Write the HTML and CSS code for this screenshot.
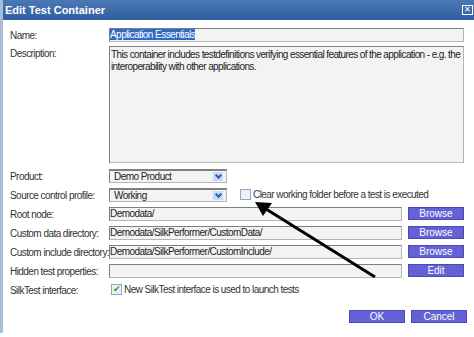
FILE: index.html
```html
<!DOCTYPE html>
<html lang="en">
<head>
  <meta charset="UTF-8">
  <title>Edit Test Container</title>
  <link rel="stylesheet" href="styles.css">
</head>
<body>
  <div class="window">
    <div class="titlebar">
      <span class="title">Edit Test Container</span>
      <span class="close">&#x2715;</span>
    </div>
    <div class="form">
      <label class="label">Name:</label>
      <div class="field"><span class="input full"><span class="selected">Application Essentials</span></span></div>

      <label class="label up">Description:</label>
      <div class="field up"><div class="textarea">This container includes testdefinitions verifying essential features of the application - e.g. the<br>interoperability with other applications.</div></div>

      <label class="label down">Product:</label>
      <div class="field down"><span class="select">Demo Product<span class="arrow"></span></span></div>

      <label class="label">Source control profile:</label>
      <div class="field">
        <span class="select">Working<span class="arrow"></span></span>
        <span class="check"></span>
        <span class="check-text">Clear working folder before a test is executed</span>
      </div>

      <label class="label">Root node:</label>
      <div class="field"><span class="input">Demodata/</span><span class="button">Browse</span></div>

      <label class="label">Custom data directory:</label>
      <div class="field"><span class="input">Demodata/SilkPerformer/CustomData/</span><span class="button">Browse</span></div>

      <label class="label">Custom include directory:</label>
      <div class="field"><span class="input">Demodata/SilkPerformer/CustomInclude/</span><span class="button">Browse</span></div>

      <label class="label">Hidden test properties:</label>
      <div class="field"><span class="input"></span><span class="button">Edit</span></div>

      <label class="label">SilkTest interface:</label>
      <div class="field"><span class="check checked">&#x2714;</span><span class="check-text">New SilkTest interface is used to launch tests</span></div>
    </div>
    <div class="actions">
      <span class="button">OK</span>
      <span class="button">Cancel</span>
    </div>

    <svg class="pointer" width="474" height="337" viewBox="0 0 474 337">
      <line x1="375" y1="277" x2="266" y2="209" stroke="#000" stroke-width="3"/>
      <polygon points="255,202 272,203 263,216" fill="#000"/>
    </svg>
  </div>
</body>
</html>
```

FILE: styles.css
```css
* {
  box-sizing: border-box;
}
body {
  margin: 0;
  background: #fff;
  font-family: "Liberation Sans", Arial, sans-serif;
  font-size: 10px;
  letter-spacing: -0.55px;
  color: #333;
}
.window {
  position: relative;
  width: 474px;
  height: 333px;
  border-left: 3px solid #a9bcd9;
}
.titlebar {
  height: 20px;
  display: flex;
  align-items: center;
  justify-content: space-between;
  padding: 0 1px 0 2px;
  background: linear-gradient(#4a78b4, #2f5f9f);
  color: #fff;
}
.title {
  font-weight: bold;
  font-size: 11px;
  letter-spacing: 0;
}
.close {
  width: 11px;
  height: 10px;
  border: 1px solid #fff;
  font-size: 8px;
  line-height: 8px;
  text-align: center;
  letter-spacing: 0;
}

/* form grid */
.form {
  display: grid;
  grid-template-columns: 99px 1fr;
  row-gap: 5px;
  padding: 8px 10px 0 7px;
}
.label {
  display: flex;
  align-items: center;
  height: 14px;
  white-space: nowrap;
}
.field {
  display: flex;
  align-items: flex-start;
  gap: 6px;
}
.up {
  margin-top: -1px;
}
.down {
  margin-top: 1px;
}
.input,
.textarea,
.select {
  display: block;
  height: 14px;
  border: 1px solid #b5b5b5;
  border-top-color: #7f7f7f;
  border-left-color: #7f7f7f;
  background: #f3f3f3;
  color: #222;
  line-height: 12px;
  white-space: nowrap;
  overflow: hidden;
}
.input {
  width: 293px;
}
.input.full {
  width: 355px;
}
.selected {
  background: #3169c6;
  color: #fff;
}
.textarea {
  width: 355px;
  height: 117px;
  padding: 2px 0 0 1px;
  letter-spacing: -0.6px;
}
.select {
  position: relative;
  width: 118px;
  padding-left: 4px;
  border-top-width: 2px;
  line-height: 11px;
}
.arrow {
  position: absolute;
  right: 3px;
  top: 1px;
  width: 10px;
  height: 9px;
  background: #c9daf3;
}
.arrow::after {
  content: "";
  position: absolute;
  left: 3px;
  top: 1px;
  width: 3px;
  height: 3px;
  border-right: 2px solid #2b5cb8;
  border-bottom: 2px solid #2b5cb8;
  transform: rotate(45deg);
}
.check {
  width: 11px;
  height: 11px;
  margin: 1px 0 0 7px;
  border: 1px solid #8ea4c8;
  background: #eef0f4;
  color: #2e9a2e;
  font-size: 9px;
  line-height: 9px;
  text-align: center;
  letter-spacing: 0;
}
.check.checked {
  margin-left: 2px;
}
.check-text {
  margin-left: -4px;
  line-height: 14px;
}
.button {
  width: 56px;
  height: 13px;
  background: #6262d4;
  border: 1px solid #4a4ab8;
  color: #fff;
  text-align: center;
  line-height: 11px;
  letter-spacing: 0;
}
.actions {
  display: flex;
  justify-content: flex-end;
  gap: 6px;
  padding: 13px 7px 0 0;
}
.pointer {
  position: absolute;
  left: -3px;
  top: 0;
  pointer-events: none;
}
```
